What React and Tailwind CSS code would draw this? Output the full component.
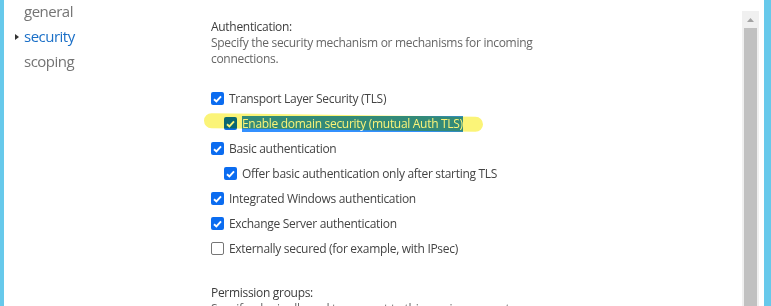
import React from 'react';

const Check = ({ checked }) =>
    checked ? (
        <span className="flex h-[13px] w-[13px] shrink-0 items-center justify-center rounded-[2px] bg-[#0b6cf0]">
            <svg width="9" height="8" viewBox="0 0 9 8" fill="none">
                <path d="M1 4.2 3.4 6.5 8 1.3" stroke="#fff" strokeWidth="1.9" />
            </svg>
        </span>
    ) : (
        <span className="h-[13px] w-[13px] shrink-0 rounded-[2px] border border-[#767676] bg-white" />
    );

const Row = ({ checked = true, indent = false, children }) => (
    <div className={`relative flex h-[25px] items-center ${indent ? 'pl-[13px]' : ''}`}>
        <Check checked={checked} />
        <span className="ml-[5px] leading-[16px]">{children}</span>
    </div>
);

const navItems = ['general', 'security', 'scoping'];

export default function App() {
    return (
        <div className="flex h-[306px] w-[771px] overflow-hidden bg-white font-['Open_Sans',sans-serif]">
            {/* left accent */}
            <div className="w-[4px] shrink-0 bg-[#67c9eb]" />

            {/* nav */}
            <div className="w-[207px] shrink-0 -mt-[1px] text-[15px] leading-[25px] tracking-[-0.5px]">
                {navItems.map((item) => (
                    <div key={item} className="flex items-center">
                        <div className="flex w-[20px] justify-end pr-[5px]">
                            {item === 'security' && (
                                <svg width="4" height="6" viewBox="0 0 4 6">
                                    <path d="M0 0 4 3 0 6Z" fill="#333" />
                                </svg>
                            )}
                        </div>
                        <span className={item === 'security' ? 'text-[#1a6fc7]' : 'text-[#747474]'}>{item}</span>
                    </div>
                ))}
            </div>

            {/* content */}
            <div className="flex-1 pt-[19px] text-[12px] leading-[16px] tracking-[-0.3px] text-[#444]">
                <div className="text-[#3c3c3c]">Authentication:</div>
                <div className="w-[340px] text-[#666]">
                    Specify the security mechanism or mechanisms for incoming connections.
                </div>

                <div className="mt-[19px]">
                    <Row>Transport Layer Security (TLS)</Row>
                    <div className="relative flex h-[25px] items-center pl-[13px]">
                        <Check checked />
                        <span className="ml-[5px] inline-block bg-[#3390ff] leading-[16px] text-white">
                            Enable domain security (mutual Auth TLS)
                        </span>
                        <div className="pointer-events-none absolute left-[-7px] top-[4px] h-[15px] w-[279px] rotate-[0.8deg] rounded-full bg-[#fbf478] mix-blend-multiply" />
                    </div>
                    <Row>Basic authentication</Row>
                    <Row indent>Offer basic authentication only after starting TLS</Row>
                    <Row>Integrated Windows authentication</Row>
                    <Row>Exchange Server authentication</Row>
                    <Row checked={false}>Externally secured (for example, with IPsec)</Row>
                </div>

                <div className="mt-[24px] text-[#3c3c3c]">Permission groups:</div>
                <div className="text-[#666]">Specify who is allowed to connect to this receive connector.</div>
            </div>

            {/* scrollbar */}
            <div className="mt-[11px] flex w-[17px] shrink-0 flex-col items-center bg-[#f0f0f0]">
                <div className="flex h-[17px] items-center justify-center">
                    <svg width="7" height="4" viewBox="0 0 7 4">
                        <path d="M0 4 3.5 0 7 4Z" fill="#a3a3a3" />
                    </svg>
                </div>
                <div className="w-[13px] flex-1 bg-[#c1c1c1]" />
            </div>

            <div className="w-[5px] shrink-0" />
            {/* right accent */}
            <div className="w-[7px] shrink-0 bg-[#67c9eb]" />
        </div>
    );
}
